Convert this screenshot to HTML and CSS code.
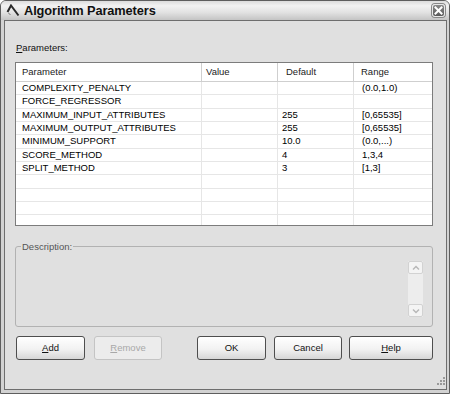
FILE: index.html
```html
<!DOCTYPE html>
<html>
<head>
<meta charset="utf-8">
<link rel="stylesheet" href="styles.css">
</head>
<body>
<div class="window">
  <div class="titlebar">
    <svg class="app-icon" width="14" height="13" viewBox="0 0 14 13">
      <polyline points="1.5,8 5,1.5 12.5,11.5" fill="none" stroke="#2a2a2a" stroke-width="2" stroke-linejoin="miter"/>
      <line x1="2.5" y1="9" x2="4.5" y2="11" stroke="#777" stroke-width="1"/>
    </svg>
    <span class="title">Algorithm Parameters</span>
    <span class="close">
      <svg width="13" height="13" viewBox="0 0 13 13">
        <path d="M3.5 3.5 L9.5 9.5 M9.5 3.5 L3.5 9.5" stroke="#fff" stroke-width="2" stroke-linecap="square"/>
      </svg>
    </span>
  </div>
  <div class="frame">
    <div class="client">
      <div class="label"><u>P</u>arameters:</div>
      <div class="grid">
        <div class="row head">
          <div class="c c1">Parameter</div>
          <div class="c c2">Value</div>
          <div class="c c3">Default</div>
          <div class="c c4">Range</div>
        </div>
        <div class="row"><div class="c c1">COMPLEXITY_PENALTY</div><div class="c c2"></div><div class="c c3"></div><div class="c c4">(0.0,1.0)</div></div>
        <div class="row"><div class="c c1">FORCE_REGRESSOR</div><div class="c c2"></div><div class="c c3"></div><div class="c c4"></div></div>
        <div class="row"><div class="c c1">MAXIMUM_INPUT_ATTRIBUTES</div><div class="c c2"></div><div class="c c3">255</div><div class="c c4">[0,65535]</div></div>
        <div class="row"><div class="c c1">MAXIMUM_OUTPUT_ATTRIBUTES</div><div class="c c2"></div><div class="c c3">255</div><div class="c c4">[0,65535]</div></div>
        <div class="row"><div class="c c1">MINIMUM_SUPPORT</div><div class="c c2"></div><div class="c c3">10.0</div><div class="c c4">(0.0,...)</div></div>
        <div class="row"><div class="c c1">SCORE_METHOD</div><div class="c c2"></div><div class="c c3">4</div><div class="c c4">1,3,4</div></div>
        <div class="row"><div class="c c1">SPLIT_METHOD</div><div class="c c2"></div><div class="c c3">3</div><div class="c c4">[1,3]</div></div>
        <div class="row"><div class="c c1"></div><div class="c c2"></div><div class="c c3"></div><div class="c c4"></div></div>
        <div class="row"><div class="c c1"></div><div class="c c2"></div><div class="c c3"></div><div class="c c4"></div></div>
        <div class="row"><div class="c c1"></div><div class="c c2"></div><div class="c c3"></div><div class="c c4"></div></div>
        <div class="row"><div class="c c1"></div><div class="c c2"></div><div class="c c3"></div><div class="c c4"></div></div>
      </div>
      <fieldset class="desc">
        <legend>Description:</legend>
        <div class="desc-body">
          <div class="vscroll">
            <div class="sbtn">
              <svg width="12" height="10" viewBox="0 0 12 10"><polyline points="3,6.5 6,3.5 9,6.5" fill="none" stroke="#b8b8b8" stroke-width="1.5"/></svg>
            </div>
            <div class="strack"></div>
            <div class="sbtn">
              <svg width="12" height="10" viewBox="0 0 12 10"><polyline points="3,3.5 6,6.5 9,3.5" fill="none" stroke="#b8b8b8" stroke-width="1.5"/></svg>
            </div>
          </div>
        </div>
      </fieldset>
      <div class="buttons">
        <div class="btn b-add"><u>A</u>dd</div>
        <div class="btn b-remove disabled"><u>R</u>emove</div>
        <div class="btn b-ok">OK</div>
        <div class="btn b-cancel">Cancel</div>
        <div class="btn b-help"><u>H</u>elp</div>
      </div>
      <svg class="grip" width="11" height="11" viewBox="0 0 11 11">
        <g fill="#9a9a9a">
          <rect x="8" y="0" width="2" height="2"/>
          <rect x="5" y="3" width="2" height="2"/><rect x="8" y="3" width="2" height="2"/>
          <rect x="2" y="6" width="2" height="2"/><rect x="5" y="6" width="2" height="2"/><rect x="8" y="6" width="2" height="2"/>
        </g>
      </svg>
    </div>
  </div>
</div>
</body>
</html>
```
FILE: styles.css
```css
* { box-sizing: border-box; }
html, body { margin: 0; padding: 0; background: #ffffff; }
body {
  font-family: "Liberation Sans", Arial, sans-serif;
  font-size: 9.5px;
  color: #000;
}
.window {
  width: 450px;
  height: 394px;
  border: 1px solid #5e5e5e;
  border-radius: 6px 6px 0 0;
  background: #d2d2d2;
  display: flex;
  flex-direction: column;
  overflow: hidden;
}
.titlebar {
  height: 19px;
  flex: none;
  display: flex;
  align-items: center;
  background: linear-gradient(#dcdcdc 0%, #f2f2f2 25%, #e2e2e2 60%, #c4c4c4 100%);
}
.app-icon { margin-left: 5px; margin-top: -1px; flex: none; }
.title {
  margin-left: 4px;
  font-size: 12.8px;
  font-weight: bold;
  letter-spacing: -0.1px;
  color: #111;
}
.close {
  margin-left: auto;
  margin-right: 4px;
  width: 13px;
  height: 13px;
  border-radius: 3px;
  background: linear-gradient(#8a8a8a, #5a5a5a);
  border: 1px solid #e8e8e8;
  box-shadow: 0 0 0 1px #888;
  display: flex;
  align-items: center;
  justify-content: center;
}
.close svg { display: block; margin: -1px; }
.frame {
  flex: 1;
  padding: 0 2px 3px 3px;
  display: flex;
}
.client {
  flex: 1;
  position: relative;
  border: 1px solid #6e6e6e;
  background: #e0e0e0;
  padding: 21px 0 0 10px;
}
.label {
  height: 12px;
  line-height: 12px;
  margin-left: 1px;
  color: #111;
}
.grid {
  margin-top: 8px;
  width: 418px;
  height: 164px;
  border: 1px solid #7c7c7c;
  background: #ffffff;
  overflow: hidden;
}
.row {
  display: grid;
  grid-template-columns: 186px 76px 76px 1fr;
  height: 13.33px;
  line-height: 12.3px;
  border-bottom: 1px solid #e6e6e6;
}
.row.head {
  height: 19px;
  line-height: 18px;
  border-bottom: 1px solid #cfcfcf;
}
.c {
  border-right: 1px solid #e6e6e6;
  white-space: nowrap;
  overflow: hidden;
}
.c4 { border-right: none; }
.head .c { border-right: 1px solid #cfcfcf; }
.head .c4 { border-right: none; }
.c1 { padding-left: 6px; }
.c2 { padding-left: 4px; }
.c3 { padding-left: 4px; }
.c4 { padding-left: 8px; }
.head .c3 { padding-left: 8px; }
.head .c4 { padding-left: 7px; }
.head .c { color: #222; }
.desc {
  margin: 15px 0 0 0;
  width: 418px;
  height: 86px;
  padding: 0 9px 8px 5px;
  border: 1px solid #b2b2b2;
  border-radius: 3px;
  min-width: 0;
}
.desc legend {
  padding: 0 1px;
  line-height: 11px;
  color: #555;
}
.desc-body {
  display: flex;
  justify-content: flex-end;
  padding-top: 9px;
}
.vscroll {
  width: 15px;
  height: 56px;
  background: #ececec;
  display: flex;
  flex-direction: column;
}
.sbtn {
  height: 13px;
  border: 1px solid #d2d2d2;
  border-radius: 2px;
  background: #f4f4f4;
  display: flex;
  align-items: center;
  justify-content: center;
}
.strack { flex: 1; background: #ededed; }
.buttons {
  display: flex;
  margin-top: 9px;
  margin-left: 1px;
}
.btn {
  height: 24px;
  line-height: 22px;
  text-align: center;
  border: 1px solid #4e4e4e;
  border-radius: 3px;
  background: linear-gradient(#ffffff 0%, #f2f2f2 55%, #d6d6d6 100%);
  color: #111;
}
.b-add { width: 69px; }
.b-remove { width: 68px; margin-left: 9px; }
.b-ok { width: 69px; margin-left: 35px; }
.b-cancel { width: 68px; margin-left: 8px; }
.b-help { width: 84px; margin-left: 7px; }
.btn.disabled {
  border-color: #c4c4c4;
  background: #ececec;
  color: #a8a8a8;
}
.grip {
  position: absolute;
  right: 0;
  bottom: 1px;
}
```
